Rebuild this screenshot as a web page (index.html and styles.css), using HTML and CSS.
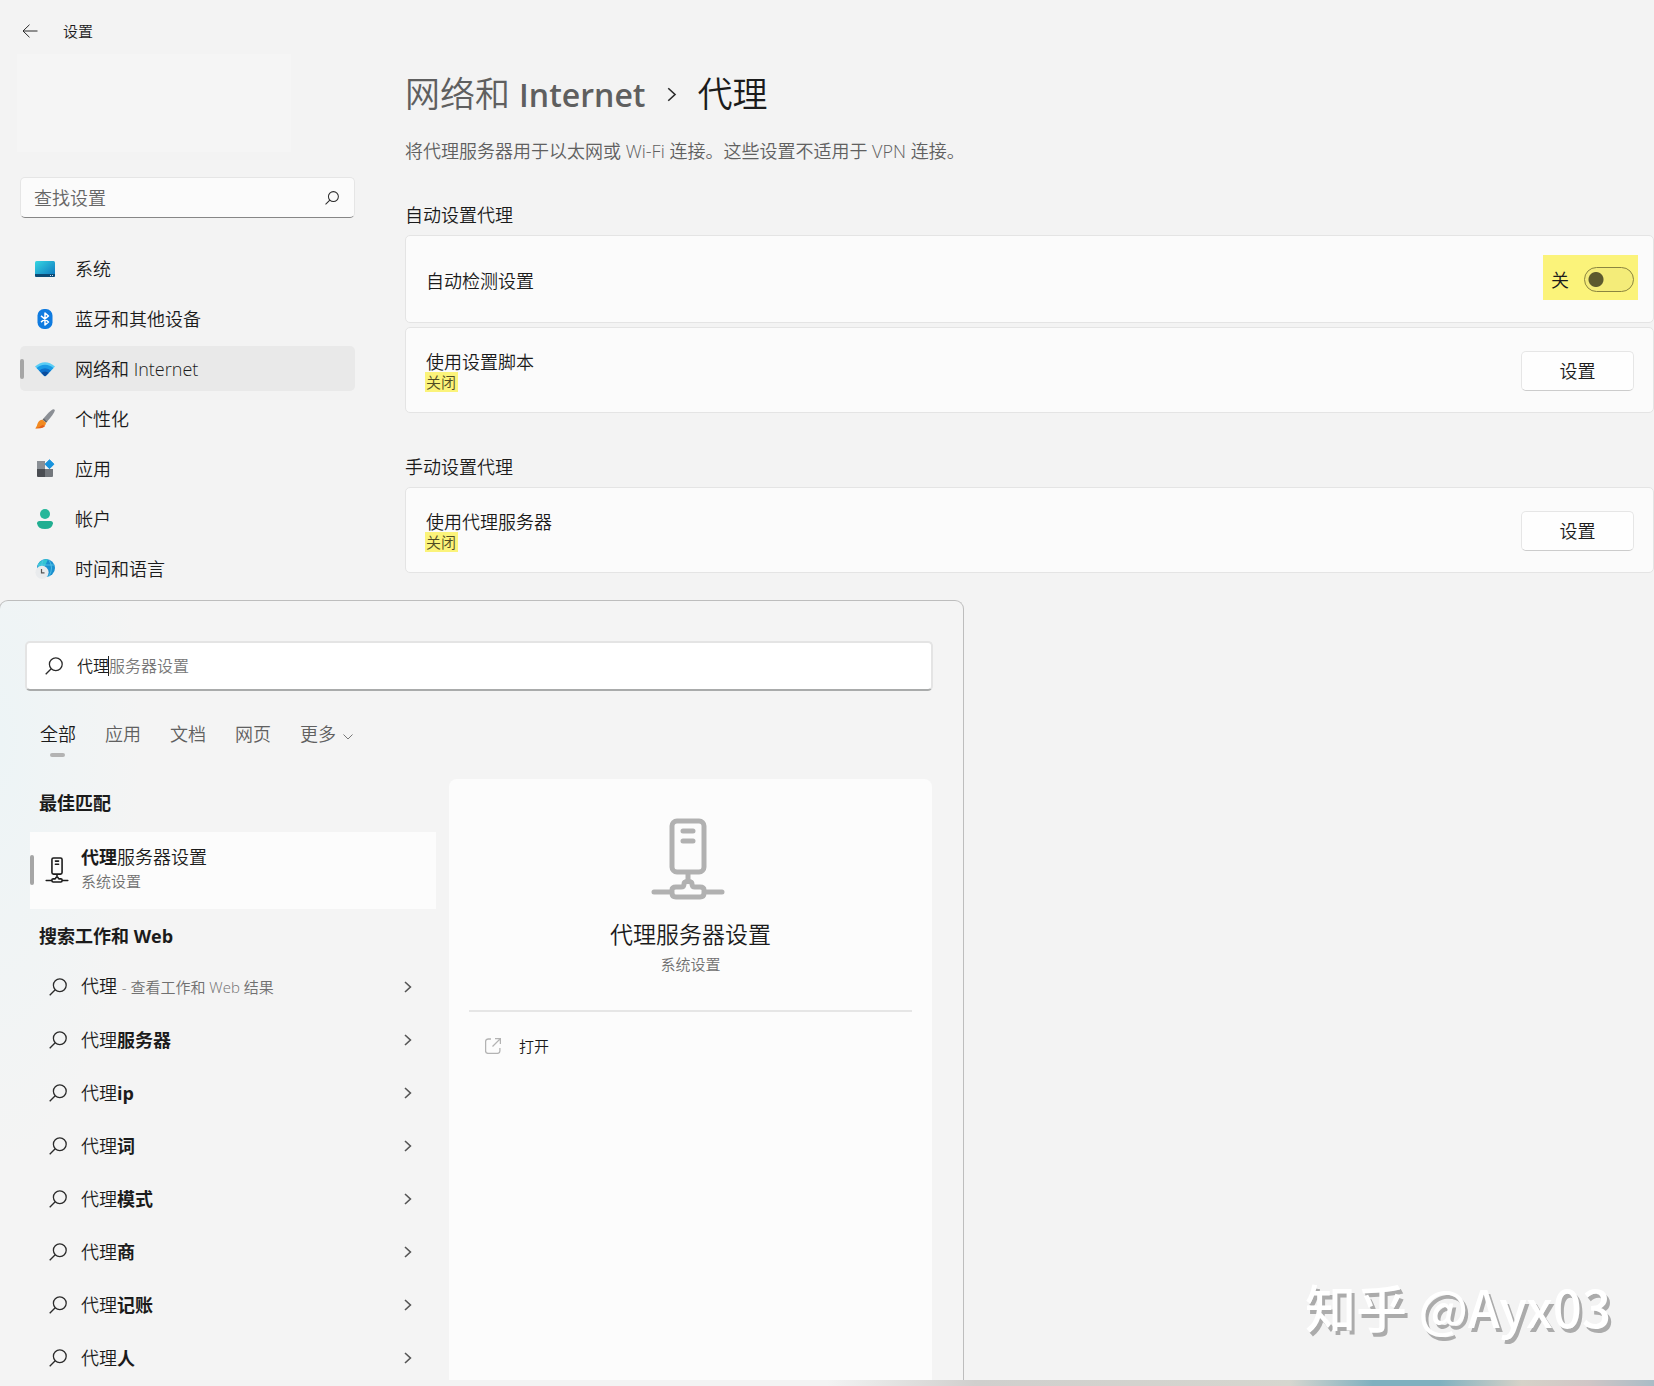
FILE: index.html
```html
<!DOCTYPE html>
<html lang="zh-CN">
<head>
<meta charset="utf-8">
<title>设置</title>
<link rel="stylesheet" href="styles.css">
</head>
<body>
<svg class="defs" aria-hidden="true">
  <symbol id="search" viewBox="0 0 18 18"><circle cx="10.8" cy="7.2" r="6.4"/><path d="M6.2 11.8 0.7 17.3"/></symbol>
  <symbol id="chevron" viewBox="0 0 8 12"><path d="M1 1l5.400 5-5.400 5"/></symbol>
  <symbol id="server" viewBox="0 0 74 82"><path d="M26 3h22a5 5 0 0 1 5 5v41a5 5 0 0 1-5 5h-22a5 5 0 0 1-5-5v-41a5 5 0 0 1 5-5zM32 13h10M32 23h10M37 54v8M3 74h18M53 74h18M25 69h5q3 0 3-3q0-2.500 4-2.500t4 2.500q0 3 3 3h5q4 0 4 3v3q0 4-4 4h-24q-4 0-4-4v-3q0-3 4-3z"/></symbol>
</svg>
<div class="app">
  <header class="titlebar">
    <button class="back" aria-label="返回"><svg width="16" height="14" viewBox="0 0 16 14"><path d="M7.500 .7 1 7l6.500 6.300M1 7h14.500"/></svg></button>
    <span>设置</span>
  </header>
  <aside class="sidebar">
    <div class="profile"></div>
    <div class="find">
      <input type="text" placeholder="查找设置" aria-label="查找设置">
      <svg class="glass" width="14" height="14"><use href="#search"/></svg>
    </div>
    <nav class="nav">
      <a href="#"><svg width="20" height="20" viewBox="0 0 20 20"><defs><linearGradient id="g1" x1="0" y1="0" x2="1" y2="1"><stop offset="0" stop-color="#36d6e2"/><stop offset="1" stop-color="#0b72bd"/></linearGradient></defs><rect y="2" width="20" height="16" rx="1.500" fill="url(#g1)"/><path d="M0 15h20v1.500a1.500 1.500 0 0 1-1.500 1.500h-17a1.500 1.500 0 0 1-1.500-1.500z" fill="#0b4a75"/><path d="M15 16.500h1m1 0h1" stroke="#cde"/></svg>系统</a>
      <a href="#"><svg width="20" height="20" viewBox="0 0 20 20"><rect x="2.500" width="15" height="20" rx="6.500" fill="#0f7be0"/><path d="M6 6.800l7.500 6.200L10 16V4l3.500 3L6 13.200" fill="none" stroke="#fff" stroke-width="1.500" stroke-linejoin="round"/></svg>蓝牙和其他设备</a>
      <a href="#" class="current"><svg width="20" height="20" viewBox="0 0 20 20"><defs><clipPath id="fan"><path d="M0 7.500Q10-1 20 7.500L10.800 16.800q-.8.800-1.600 0z"/></clipPath></defs><g clip-path="url(#fan)"><path d="M0 0h20v20H0z" fill="#59cdf5"/><circle cx="10" cy="18" r="12.200" fill="#1a9be6"/><circle cx="10" cy="18" r="8.800" fill="#0c70cb"/><circle cx="10" cy="18" r="5.500" fill="#0a4c9c"/></g></svg>网络和 Internet</a>
      <a href="#"><svg width="20" height="20" viewBox="0 0 20 20"><path d="M17.500.4q2-.8 2.300 1.200-.5 3-7.600 10.900l-3.700-3Q14.500 1.900 17.500.4z" fill="#8b8f95"/><path d="M8.800 9.300l3.500 3.100-1.200 1.300-3.600-3z" fill="#63666b"/><path d="M7.400 10.800l3.700 3q-.5 5.900-10.800 5.600Q2 17.500 2.500 14.700q1.500-3.800 4.900-3.900z" fill="#f28a20"/><path d="M7.500 16q-3 2.700-7 3.200 7.500.6 9.600-2.200z" fill="#e5601a"/></svg>个性化</a>
      <a href="#"><svg width="20" height="20" viewBox="0 0 20 20"><path d="M2 2h8v8H2z" fill="#8a8f95"/><path d="M2 10h8v8H3a1 1 0 0 1-1-1z" fill="#4a4d52"/><path d="M10 10h8v7a1 1 0 0 1-1 1h-7z" fill="#73777c"/><path d="M14.500.8l4.500 4.400-4.500 4.500-4.500-4.500z" fill="#1793dd" stroke="#1793dd" stroke-linejoin="round"/></svg>应用</a>
      <a href="#"><svg width="20" height="20" viewBox="0 0 20 20"><circle cx="10" cy="5" r="5" fill="#25b79a"/><path d="M4.500 12h11A2.500 2.500 0 0 1 18 14.500Q17 20 10 20T2 14.500A2.500 2.500 0 0 1 4.500 12z" fill="#21ae91"/></svg>帐户</a>
      <a href="#"><svg width="20" height="20" viewBox="0 0 20 20"><circle cx="11" cy="9" r="9" fill="#1a90cf"/><path d="M3 5Q7-.5 13 .3L10 7 3 9z" fill="#32c5d2"/><path d="M8 1q-4 8 5 17M14 1q5 8 0 16M3 6h16" fill="none" stroke="#58c7e8" stroke-width=".8"/><circle cx="7" cy="13.300" r="6.600" fill="#e9ebed"/><path d="M6.500 10v3.800h3" fill="none" stroke="#555" stroke-width="1.200"/></svg>时间和语言</a>
    </nav>
  </aside>
  <main class="content">
    <h1><a href="#">网络和 <b>Internet</b></a><svg class="crumb" width="10" height="15"><use href="#chevron"/></svg><span>代理</span></h1>
    <p class="lead">将代理服务器用于以太网或 Wi-Fi 连接。这些设置不适用于 VPN 连接。</p>
    <section>
      <h2>自动设置代理</h2>
      <div class="card tall"><span class="text">自动检测设置</span>
        <label class="toggle"><span>关</span><input type="checkbox" role="switch"></label></div>
      <div class="card"><div class="text"><div>使用设置脚本</div><mark>关闭</mark></div><button class="set">设置</button></div>
    </section>
    <section>
      <h2>手动设置代理</h2>
      <div class="card"><div class="text"><div>使用代理服务器</div><mark>关闭</mark></div><button class="set">设置</button></div>
    </section>
  </main>
</div>
<div class="flyout">
  <div class="query">
    <svg class="glass" width="18" height="18"><use href="#search"/></svg>
    <div class="typed"><input type="text" value="代理" aria-label="搜索"><span class="hint">服务器设置</span></div>
  </div>
  <div class="tabs">
    <button class="on">全部</button><button>应用</button><button>文档</button><button>网页</button><button>更多<svg width="10" height="6" viewBox="0 0 10 6"><path d="M.5.5 5 5 9.500.5"/></svg></button>
  </div>
  <div class="results">
    <div class="list">
      <h3>最佳匹配</h3>
      <a href="#" class="best"><svg class="server" width="24" height="26"><use href="#server"/></svg><span><b>代理</b>服务器设置<small>系统设置</small></span></a>
      <h3>搜索工作和 Web</h3>
      <a href="#" class="row"><svg class="glass" width="18" height="18"><use href="#search"/></svg><span>代理 <small>- 查看工作和 Web 结果</small></span><svg class="go" width="8" height="12"><use href="#chevron"/></svg></a>
      <a href="#" class="row"><svg class="glass" width="18" height="18"><use href="#search"/></svg><span>代理<b>服务器</b></span><svg class="go" width="8" height="12"><use href="#chevron"/></svg></a>
      <a href="#" class="row"><svg class="glass" width="18" height="18"><use href="#search"/></svg><span>代理<b>ip</b></span><svg class="go" width="8" height="12"><use href="#chevron"/></svg></a>
      <a href="#" class="row"><svg class="glass" width="18" height="18"><use href="#search"/></svg><span>代理<b>词</b></span><svg class="go" width="8" height="12"><use href="#chevron"/></svg></a>
      <a href="#" class="row"><svg class="glass" width="18" height="18"><use href="#search"/></svg><span>代理<b>模式</b></span><svg class="go" width="8" height="12"><use href="#chevron"/></svg></a>
      <a href="#" class="row"><svg class="glass" width="18" height="18"><use href="#search"/></svg><span>代理<b>商</b></span><svg class="go" width="8" height="12"><use href="#chevron"/></svg></a>
      <a href="#" class="row"><svg class="glass" width="18" height="18"><use href="#search"/></svg><span>代理<b>记账</b></span><svg class="go" width="8" height="12"><use href="#chevron"/></svg></a>
      <a href="#" class="row"><svg class="glass" width="18" height="18"><use href="#search"/></svg><span>代理<b>人</b></span><svg class="go" width="8" height="12"><use href="#chevron"/></svg></a>
    </div>
    <div class="detail">
      <svg class="server big" width="74" height="82"><use href="#server"/></svg>
      <h4>代理服务器设置</h4>
      <p>系统设置</p>
      <hr>
      <button class="open"><svg width="16" height="16" viewBox="0 0 16 16"><path d="M6 1H3A2.500 2.500 0 0 0 .6 3.500v9.400A2.500 2.500 0 0 0 3 15.400h9.500a2.500 2.500 0 0 0 2.400-2.500V10M10 .6h5.400V6M15.400.6 7.500 8.500"/></svg>打开</button>
    </div>
  </div>
</div>
<div class="strip"></div>
<div class="credit">知乎 <span>@Ayx03</span></div>
</body>
</html>
```
FILE: styles.css
```css
* { box-sizing: border-box; }
body {
  margin: 0;
  position: relative;
  height: 100vh;
  overflow: hidden;
  background: #f3f3f3;
  color: #1b1b1b;
  font: 350 18px/24px "Open Sans", "Noto Sans CJK SC", sans-serif;
}
h1, h2, h3, h4, p { margin: 0; font-weight: inherit; }
a { color: inherit; text-decoration: none; }
button, input { font: inherit; color: inherit; border: 0; background: none; padding: 0; }
b { font-weight: 700; }
svg { flex: none; }
.defs { position: absolute; width: 0; height: 0; }
.glass, .crumb, .go, .server, .back svg, .tabs svg, .open svg { fill: none; stroke: #2b2b2b; stroke-width: 1.3; }

.app {
  display: grid;
  grid-template-columns: 355px 1fr;
  column-gap: 50px;
}
.titlebar {
  grid-column: 1 / -1;
  display: flex;
  align-items: center;
  gap: 25px;
  height: 54px;
  padding: 7px 22px 0;
  font-size: 15px;
}
.back { display: flex; }
.back svg { stroke-width: 1; }
.sidebar { padding-left: 20px; }
.profile { width: 274px; height: 98px; margin-left: -3px; background: #f5f5f5; }
.find {
  display: flex;
  align-items: center;
  height: 41px;
  margin-top: 25px;
  padding: 0 15px 0 13px;
  background: #fbfbfb;
  border: 1px solid #e5e5e5;
  border-bottom-color: #868686;
  border-radius: 5px;
}
.find input { flex: 1; min-width: 0; outline: 0; }
.find input::placeholder { color: #666; opacity: 1; }
.nav { display: grid; gap: 5px; margin-top: 28px; }
.nav a {
  position: relative;
  display: flex;
  align-items: center;
  gap: 20px;
  height: 45px;
  padding: 1px 0 0 15px;
  border-radius: 5px;
}
.nav .current { background: #e9e9e9; }
.current::before {
  content: "";
  position: absolute;
  left: 0;
  width: 4px;
  height: 20px;
  border-radius: 2px;
  background: #a6a6a6;
}

h1 { display: flex; align-items: center; height: 48px; margin-top: 16px; font-size: 35px; }
h1 a { color: #5f5f5f; }
h1 b { font-size: 32px; font-weight: 600; }
.crumb { margin: 0 21px; }
.lead { margin-top: 21px; color: #606060; }
.content h2 { margin-bottom: 8px; font-size: 18px; }
.content section { margin-top: 40px; }
.content section + section { margin-top: 42px; }
.card {
  display: flex;
  align-items: center;
  justify-content: space-between;
  height: 86px;
  margin-bottom: 4px;
  padding: 0 19px 0 20px;
  background: #fbfbfb;
  border: 1px solid #e4e4e4;
  border-radius: 5px;
  line-height: 20px;
}
.tall { height: 88px; }
.text { padding-top: 4px; }
mark { display: block; width: fit-content; margin-left: -1px; padding: 0 2px 0 1px; background: #fbf37a; color: #4f4c24; font-size: 15px; line-height: 20px; }
.toggle {
  display: flex;
  align-items: center;
  gap: 15px;
  height: 45px;
  margin: 0 -4px 4px 0;
  padding: 4px 4px 0 8px;
  background: #fbf37a;
}
.toggle span { padding-top: 2px; }
.toggle input {
  appearance: none;
  width: 50px;
  height: 25px;
  margin: 0;
  border: 1px solid #8b8540;
  border-radius: 13px;
  background: radial-gradient(circle at 11px 50%, #5c592e 7px, transparent 8px) #f4ec79;
}
.set {
  width: 113px;
  height: 40px;
  margin-top: 2px;
  background: #fefefe;
  border: 1px solid #e6e6e6;
  border-bottom-color: #ccc;
  border-radius: 5px;
}

.flyout {
  position: absolute;
  left: -1px;
  top: 600px;
  bottom: 6px;
  width: 965px;
  display: flex;
  flex-direction: column;
  padding: 40px 31px 0 25px;
  overflow: hidden;
  border: 1px solid #bdbdbd;
  border-bottom: 0;
  border-radius: 9px 9px 0 0;
  background: radial-gradient(ellipse 140px 420px at 0 140px, #edf4f6, #f4f4f4);
}
.query {
  flex: none;
  display: flex;
  align-items: center;
  gap: 14px;
  height: 50px;
  margin-right: -1px;
  padding-left: 18px;
  background: #fff;
  border: 2px solid #e4e4e4;
  border-bottom-color: #a9abab;
  border-radius: 5px;
  font-size: 16px;
}
.typed { display: flex; align-items: center; }
.typed input { width: 32px; height: 20px; border-right: 1px solid #222; outline: 0; }
.hint { color: #777; }
.tabs { flex: none; display: flex; gap: 29px; margin: 27px 0 0 15px; }
.tabs button { position: relative; height: 39px; padding-bottom: 7px; color: #606060; }
.tabs .on { color: #1b1b1b; }
.tabs .on::after {
  content: "";
  position: absolute;
  left: 10px;
  bottom: 0;
  width: 15px;
  height: 4px;
  border-radius: 2px;
  background: #b3b3b3;
}
.tabs svg { margin-left: 7px; stroke: #777; stroke-width: 1; vertical-align: 1px; }
.results { flex: 1; display: grid; grid-template-columns: 406px 1fr; column-gap: 13px; margin: 22px 0 0 5px; }
h3 { padding-left: 9px; font-size: 18px; font-weight: 700; }
.list h3:first-child { margin: 12px 0 17px; }
.best { position: relative; display: flex; align-items: center; gap: 12px; height: 77px; margin-bottom: 15px; padding: 0 0 2px 15px; background: #fcfcfc; }
.best::before { content: ""; position: absolute; left: 0; width: 4px; height: 30px; border-radius: 2px; background: #a6a6a6; }
.best span { padding-bottom: 2px; }
small { color: #707070; font-size: 15px; }
.best small { display: block; }
.server { stroke-width: 5; stroke: #1b1b1b; stroke-linecap: round; }
.row { display: grid; grid-template-columns: 18px 1fr 8px; align-items: center; column-gap: 14px; height: 53px; margin-right: 24px; padding-left: 19px; }
.row:nth-of-type(2) { margin-top: 12px; }
.go { stroke: #555; stroke-width: 1.6; }
.detail { display: flex; flex-direction: column; align-items: center; padding: 39px 20px 0; background: #fcfcfc; border-radius: 8px 8px 0 0; }
.big { margin-right: 6px; stroke: #b1b1b1; }
h4 { margin-top: 19px; font-size: 23px; line-height: 30px; }
.detail p { margin-top: 3px; color: #707070; font-size: 15px; line-height: 24px; }
hr { width: 100%; height: 2px; margin: 34px 0 22px; border: 0; background: #e6e6e6; }
.open { align-self: flex-start; display: flex; align-items: center; gap: 18px; margin-left: 16px; font-size: 15px; }
.open svg { stroke: #b3b3b3; }

.strip {
  position: absolute;
  left: 0;
  right: 0;
  bottom: 0;
  height: 6px;
  background: linear-gradient(90deg, #f3f3f3, #f3f3f3 50%, #d0cfcd 59%, #d6d6cf 78%, #7fb0bf 83%, #7fb0bf 87%, #d6d2c8 92%, #d0c6c6 96%, #a9bcc6);
}
.credit {
  position: absolute;
  right: 43px;
  bottom: 48px;
  color: #fff;
  font: 500 51px/64px "Noto Sans CJK SC", sans-serif;
  text-shadow: 3px 4px 0 #ababab;
}
```
